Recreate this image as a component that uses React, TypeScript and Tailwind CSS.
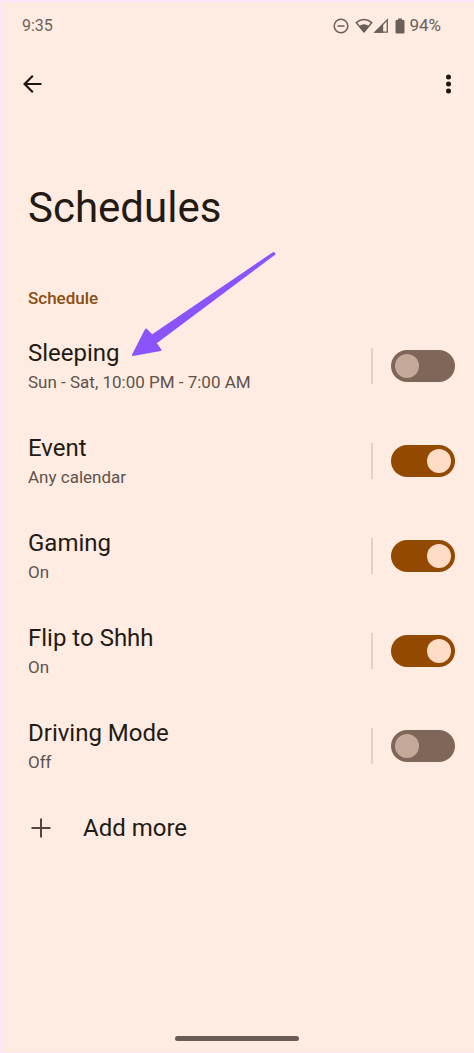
import { useState } from "react";

type Schedule = {
  id: string;
  title: string;
  summary: string;
  enabled: boolean;
};

const initialSchedules: Schedule[] = [
  { id: "sleeping", title: "Sleeping", summary: "Sun - Sat, 10:00 PM - 7:00 AM", enabled: false },
  { id: "event", title: "Event", summary: "Any calendar", enabled: true },
  { id: "gaming", title: "Gaming", summary: "On", enabled: true },
  { id: "flip", title: "Flip to Shhh", summary: "On", enabled: true },
  { id: "driving", title: "Driving Mode", summary: "Off", enabled: false },
];

export default function App() {
  const [schedules, setSchedules] = useState<Schedule[]>(initialSchedules);

  const toggle = (id: string) => {
    setSchedules((prev) => prev.map((s) => (s.id === id ? { ...s, enabled: !s.enabled } : s)));
  };

  return (
    <div className="flex min-h-screen flex-col border-t-2 border-b border-l-2 border-[#fde6fb] bg-[#feece2] font-['Roboto','Liberation_Sans',sans-serif] text-[#231a14]">
      <StatusBar />

      <header className="flex h-17 items-center justify-between pr-4 pl-5">
        <button type="button" aria-label="Back" className="flex size-5 items-center justify-center">
          <BackIcon />
        </button>
        <button type="button" aria-label="More options" className="flex h-6 w-5 items-center justify-center">
          <MoreIcon />
        </button>
      </header>

      <main className="relative flex-1 pr-[19px] pl-[26px]">
        <h1 className="mt-[62px] text-[42px] leading-14">Schedules</h1>
        <h2 className="mt-[50px] text-[17px] leading-6 font-medium text-[#8b4d12]">Schedule</h2>

        <ul className="mt-2">
          {schedules.map((s) => (
            <ScheduleRow key={s.id} schedule={s} onToggle={() => toggle(s.id)} />
          ))}
        </ul>

        <button type="button" className="flex h-[70px] w-full items-center gap-8 pl-[3px] text-2xl">
          <PlusIcon />
          Add more
        </button>

        <PointerArrow />
      </main>

      <footer className="flex justify-center pr-0.5 pb-[11px]">
        <div className="h-[5px] w-[124px] rounded-full bg-[#6b5b57]" />
      </footer>
    </div>
  );
}

function StatusBar() {
  return (
    <div className="flex h-12 items-center justify-between pr-[33px] pl-5 text-base text-[#6b5f59]">
      <span>9:35</span>
      <div className="flex items-center">
        <DndIcon />
        <WifiIcon />
        <SignalIcon />
        <BatteryIcon />
        <span className="ml-1 text-[17px]">94%</span>
      </div>
    </div>
  );
}

function ScheduleRow({ schedule, onToggle }: { schedule: Schedule; onToggle: () => void }) {
  return (
    <li className="flex h-[95px] items-center">
      <label htmlFor={schedule.id} className="flex-1">
        <span className="block text-2xl leading-8">{schedule.title}</span>
        <span className="block text-[17px] leading-[26px] text-[#5f524b]">{schedule.summary}</span>
      </label>
      <div className="mr-[18px] h-9 w-0.5 bg-[#e3d1c7]" />
      <input
        id={schedule.id}
        type="checkbox"
        role="switch"
        checked={schedule.enabled}
        onChange={onToggle}
        className="flex h-8 w-16 cursor-pointer appearance-none items-center rounded-full bg-[#806659] px-1 before:size-6 before:rounded-full before:bg-[#c4a898] checked:justify-end checked:bg-[#934900] checked:before:bg-[#fedcc5]"
      />
    </li>
  );
}

function BackIcon() {
  return (
    <svg width="20" height="20" viewBox="0 0 20 20" fill="none" stroke="#1f1511" strokeWidth="2.200">
      <path d="M19.500 10H3M10.800 1.800 2.600 10l8.200 8.200" />
    </svg>
  );
}

function MoreIcon() {
  return (
    <svg width="6" height="20" viewBox="0 0 6 20" fill="#1f1511">
      <circle cx="3.500" cy="3" r="2.500" />
      <circle cx="3.500" cy="10" r="2.500" />
      <circle cx="3.500" cy="17" r="2.500" />
    </svg>
  );
}

function PlusIcon() {
  return (
    <svg width="20" height="20" viewBox="0 0 20 20" fill="none" stroke="#54463f" strokeWidth="2">
      <path d="M10 0.500v19M0.500 10h19" />
    </svg>
  );
}

function DndIcon() {
  return (
    <svg width="16" height="16" viewBox="0 0 16 16" fill="none" stroke="currentColor" strokeWidth="1.500">
      <circle cx="8" cy="8" r="6.800" />
      <path d="M4.500 8h7" />
    </svg>
  );
}

function WifiIcon() {
  return (
    <svg className="ml-1.5" width="18" height="16" viewBox="0 0 18 16">
      <path d="M1.200 4.600Q9-1.600 16.800 4.600L9 14z" fill="none" stroke="currentColor" strokeWidth="1.500" strokeLinejoin="round" />
      <path d="M4.200 8Q9 4.600 13.800 8L9 14z" fill="currentColor" />
    </svg>
  );
}

function SignalIcon() {
  return (
    <svg width="16" height="16" viewBox="0 0 16 16">
      <path d="M2 14.200 14.300 1.900v12.300z" fill="none" stroke="currentColor" strokeWidth="1.300" />
      <path d="M1 14.800 10.200 5.600v9.200z" fill="currentColor" />
    </svg>
  );
}

function BatteryIcon() {
  return (
    <svg className="ml-1.5" width="10" height="16" viewBox="0 0 10 16" fill="currentColor">
      <path d="M3 0.500h4v1.500h1.500q1 0 1 1v11.500q0 1-1 1h-7q-1 0-1-1V3q0-1 1-1H3z" />
    </svg>
  );
}

// Points at the Sleeping row
function PointerArrow() {
  return (
    <svg
      className="pointer-events-none absolute top-[132px] left-32 text-[#8b54fb]"
      width="148"
      height="110"
      viewBox="0 0 148 110"
      fill="currentColor"
      stroke="currentColor"
      strokeWidth="2"
      strokeLinejoin="round"
    >
      <path d="M143.500 3 22 85.500 16 79.500 3 105l27.500-5-5-7L144.500 4z" />
    </svg>
  );
}
